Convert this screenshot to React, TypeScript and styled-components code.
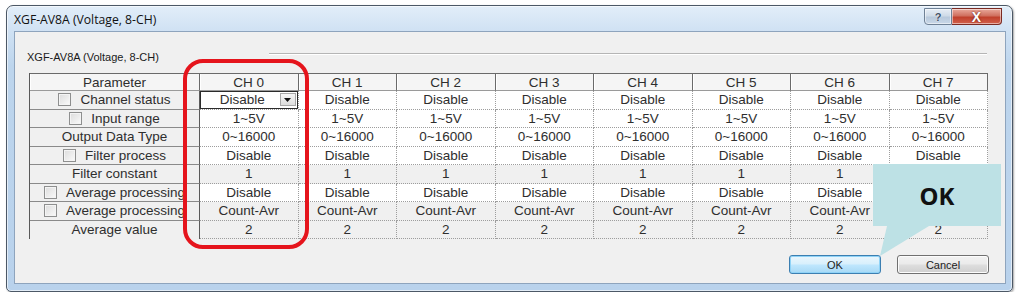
import React from "react";
import styled, { createGlobalStyle } from "styled-components";

const GlobalStyle = createGlobalStyle`
  html, body {
    margin: 0;
    padding: 0;
    background: #ffffff;
  }
  body {
    font-family: "Liberation Sans", Arial, sans-serif;
  }
`;

const Page = styled.div`
  padding: 5px 0 0 6px;
`;

const Window = styled.div`
  position: relative;
  width: 1007px;
  height: 287px;
  box-sizing: border-box;
  display: flex;
  flex-direction: column;
  border: 1px solid #4c5866;
  border-radius: 7px 7px 5px 5px;
  background: linear-gradient(to bottom, #e2eef9 0px, #cfe1f3 26px, #bdd5ed 60px, #b9d2ec 100%);
  box-shadow: 1px 1px 2px rgba(0, 0, 0, 0.35), inset 0 0 0 1px rgba(255, 255, 255, 0.6);
  padding: 0 6px 7px 7px;
`;

const TitleBar = styled.div`
  height: 25px;
  display: flex;
  align-items: flex-start;
  justify-content: space-between;
`;

const Title = styled.span`
  font-family: "Open Sans", "Noto Sans", sans-serif;
  font-size: 12.2px;
  color: #111;
  padding-top: 5px;
`;

const Caption = styled.div`
  display: flex;
  margin-top: 2px;
  margin-right: 4px;
`;

const CaptionButton = styled.div<{ $close?: boolean }>`
  width: ${(p) => (p.$close ? "50px" : "28px")};
  height: 17px;
  box-sizing: border-box;
  display: flex;
  align-items: center;
  justify-content: center;
  border: 1px solid ${(p) => (p.$close ? "#7a2a22" : "#6f8196")};
  border-left: ${(p) => (p.$close ? "none" : undefined)};
  border-radius: ${(p) => (p.$close ? "0 0 4px 0" : "0 0 0 4px")};
  background: ${(p) =>
    p.$close
      ? "linear-gradient(to bottom, #e9a99c 0%, #d0705f 45%, #c0402c 55%, #d2614c 100%)"
      : "linear-gradient(to bottom, #e7eef6 0%, #cfdbe8 45%, #b8c9dc 55%, #c9d8e8 100%)"};
  box-shadow: inset 0 0 0 1px rgba(255, 255, 255, 0.5);
  font-family: "Liberation Sans", Arial, sans-serif;
  font-weight: bold;
  font-size: ${(p) => (p.$close ? "14px" : "11px")};
  color: ${(p) => (p.$close ? "#fff" : "#3e5066")};
  text-shadow: ${(p) => (p.$close ? "0 0 2px #5a1a12" : "0 0 1px #fff")};
`;

const Panel = styled.div`
  flex: 1;
  display: flex;
  flex-direction: column;
  background: #f0f0f0;
  border: 1px solid #8ea4bd;
  padding: 15px 16px 9px 12px;
`;

const GroupHeader = styled.div`
  display: flex;
  align-items: flex-start;
  height: 26px;
`;

const GroupLabel = styled.span`
  font-family: "Liberation Sans", Arial, sans-serif;
  font-size: 11px;
  color: #1a1a1a;
  padding-top: 4px;
`;

const GroupLine = styled.div`
  flex: 1;
  margin-left: 110px;
  margin-right: 2px;
  margin-top: 6px;
  border-top: 1px solid #b5b5b5;
  border-bottom: 1px solid #ffffff;
`;

const Table = styled.div`
  display: grid;
  grid-template-columns: 170px repeat(8, 98.5px);
  grid-template-rows: 18px repeat(8, 18.5px);
  border-left: 1px solid #5a5a5a;
  margin-left: 2px;
  font-size: 13.5px;
  color: #2e2e2e;
`;

const HeaderCell = styled.div`
  display: flex;
  align-items: center;
  justify-content: center;
  background: #f5f5f5;
  border-top: 1px solid #6a6a6a;
  border-right: 1px solid #6a6a6a;
  border-bottom: 1px solid #9a9a9a;
  box-shadow: inset 1px 0 0 #ffffff;
  white-space: nowrap;
`;

const ParamCell = styled.div<{ $last?: boolean }>`
  display: flex;
  align-items: center;
  justify-content: center;
  gap: 9px;
  overflow: hidden;
  white-space: nowrap;
  background: #f0f0f0;
  border-right: 1px solid #5a5a5a;
  border-bottom: ${(p) => (p.$last ? "none" : "1px solid #8a8a8a")};
`;

const ValueCell = styled.div<{ $editable: boolean }>`
  display: flex;
  align-items: center;
  justify-content: center;
  background: ${(p) => (p.$editable ? "#ffffff" : "#f0f0f0")};
  border-right: 1px dotted #9d9d9d;
  border-bottom: 1px dotted #9d9d9d;
  white-space: nowrap;
`;

const CheckBox = styled.span`
  flex: none;
  width: 13px;
  height: 13px;
  box-sizing: border-box;
  border: 1px solid #8e8f8f;
  background: linear-gradient(135deg, #dcdcdc 0%, #eeeeee 60%, #fbfbfb 100%);
  box-shadow: inset 0 0 0 1px #f4f4f4;
`;

const Combo = styled.div`
  width: 100%;
  height: 100%;
  box-sizing: border-box;
  display: flex;
  align-items: center;
  border: 1px solid #2b2b2b;
  background: #fff;
  padding: 1px 1px 1px 0;
`;

const ComboText = styled.span`
  flex: 1;
  text-align: center;
  padding-left: 4px;
`;

const ComboArrow = styled.span`
  width: 16px;
  height: 13px;
  box-sizing: border-box;
  display: flex;
  align-items: center;
  justify-content: center;
  border: 1px solid #a8a8a8;
  background: linear-gradient(to bottom, #f6f6f6, #dedede);
`;

const ButtonRow = styled.div`
  margin-top: auto;
  display: flex;
  justify-content: flex-end;
  gap: 16px;
`;

const Button = styled.button<{ $default?: boolean }>`
  width: 92px;
  height: 19px;
  box-sizing: border-box;
  padding: 0;
  border: 1px solid ${(p) => (p.$default ? "#3c7fb1" : "#707070")};
  border-radius: 3px;
  background: ${(p) =>
    p.$default
      ? "linear-gradient(to bottom, #eaf6fd 0%, #d9f0fc 45%, #bee6fd 55%, #a7d9f5 100%)"
      : "linear-gradient(to bottom, #f2f2f2 0%, #ebebeb 45%, #dddddd 55%, #cfcfcf 100%)"};
  box-shadow: ${(p) =>
    p.$default ? "inset 0 0 0 1px #8fd3f7" : "inset 0 0 0 1px #fcfcfc"};
  font-family: "Liberation Sans", Arial, sans-serif;
  font-size: 11px;
  color: #222;
`;

const Highlight = styled.div`
  position: absolute;
  left: 176px;
  top: 53px;
  width: 126px;
  height: 190px;
  box-sizing: border-box;
  border: 4px solid #e5141c;
  border-radius: 20px;
  pointer-events: none;
`;

const Callout = styled.div`
  position: absolute;
  left: 866px;
  top: 158px;
  width: 128px;
  height: 62px;
  display: flex;
  align-items: center;
  justify-content: center;
  background: #bde1e5;
  font-family: "Noto Sans", "Open Sans", sans-serif;
  font-weight: bold;
  font-size: 24px;
  color: #111;
`;

const CalloutTail = styled.svg`
  position: absolute;
  left: 0;
  top: 100%;
  overflow: visible;
`;

type Row = {
  label: string;
  check: boolean;
  value: string;
  editable: boolean;
};

const rows: Row[] = [
  { label: "Channel status", check: true, value: "Disable", editable: true },
  { label: "Input range", check: true, value: "1~5V", editable: true },
  { label: "Output Data Type", check: false, value: "0~16000", editable: true },
  { label: "Filter process", check: true, value: "Disable", editable: true },
  { label: "Filter constant", check: false, value: "1", editable: false },
  { label: "Average processing", check: true, value: "Disable", editable: true },
  { label: "Average processing", check: true, value: "Count-Avr", editable: false },
  { label: "Average value", check: false, value: "2", editable: false },
];

const channels = [0, 1, 2, 3, 4, 5, 6, 7];

export default function App() {
  return (
    <>
      <GlobalStyle />
      <Page>
        <Window>
          <TitleBar>
            <Title>XGF-AV8A (Voltage, 8-CH)</Title>
            <Caption>
              <CaptionButton>?</CaptionButton>
              <CaptionButton $close>X</CaptionButton>
            </Caption>
          </TitleBar>
          <Panel>
            <GroupHeader>
              <GroupLabel>XGF-AV8A (Voltage, 8-CH)</GroupLabel>
              <GroupLine />
            </GroupHeader>
            <Table>
              <HeaderCell>Parameter</HeaderCell>
              {channels.map((ch) => (
                <HeaderCell key={ch}>CH {ch}</HeaderCell>
              ))}
              {rows.map((row, r) => (
                <React.Fragment key={r}>
                  <ParamCell $last={r === rows.length - 1}>
                    {row.check && <CheckBox />}
                    <span>{row.label}</span>
                  </ParamCell>
                  {channels.map((ch) => (
                    <ValueCell key={ch} $editable={row.editable}>
                      {r === 0 && ch === 0 ? (
                        <Combo>
                          <ComboText>{row.value}</ComboText>
                          <ComboArrow>
                            <svg width="7" height="4" viewBox="0 0 7 4">
                              <polygon points="0,0 7,0 3.5,4" fill="#111" />
                            </svg>
                          </ComboArrow>
                        </Combo>
                      ) : (
                        row.value
                      )}
                    </ValueCell>
                  ))}
                </React.Fragment>
              ))}
            </Table>
            <ButtonRow>
              <Button $default>OK</Button>
              <Button>Cancel</Button>
            </ButtonRow>
          </Panel>
          <Highlight />
          <Callout>
            OK
            <CalloutTail width="60" height="30">
              <polygon points="14,0 56,0 7,30" fill="#bde1e5" />
            </CalloutTail>
          </Callout>
        </Window>
      </Page>
    </>
  );
}
